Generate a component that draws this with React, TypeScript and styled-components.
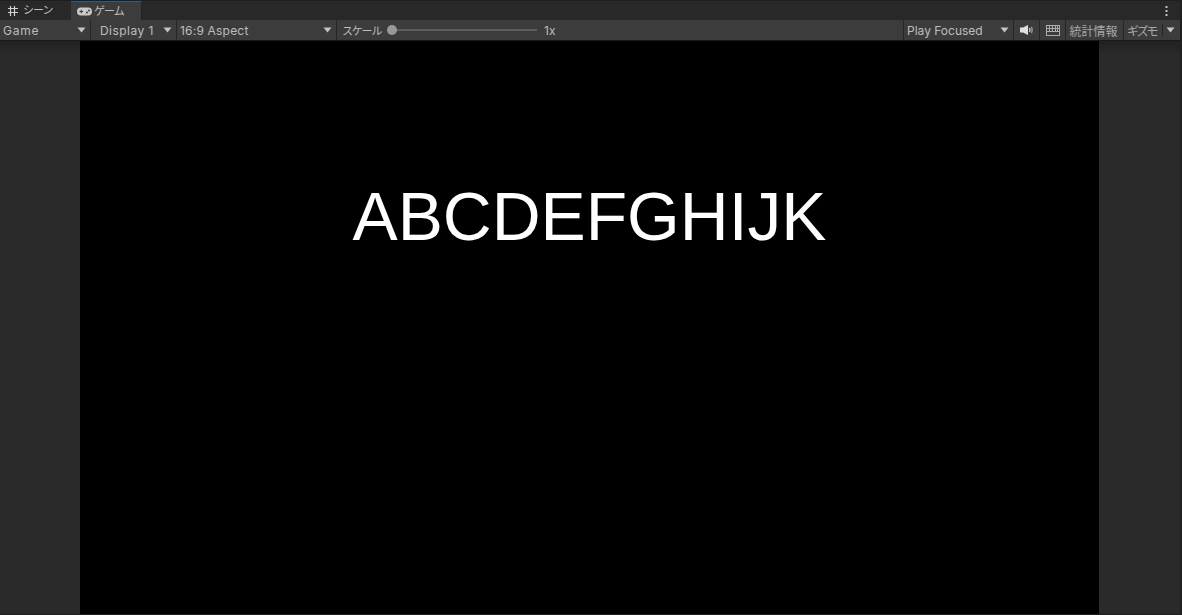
import React from "react";
import styled, { createGlobalStyle } from "styled-components";

const GlobalStyle = createGlobalStyle`
  html, body {
    margin: 0;
    padding: 0;
    height: 100%;
    background: #282828;
    overflow: hidden;
  }
  #root {
    height: 100%;
  }
`;

const Window = styled.div`
  width: 1182px;
  height: 615px;
  box-sizing: border-box;
  display: flex;
  flex-direction: column;
  font-family: Inter, "Noto Sans CJK JP", sans-serif;
  font-size: 12px;
  color: #bdbdbd;
  background: #282828;
  border-right: 2px solid #202020;
`;

const TabBar = styled.div`
  height: 20px;
  flex: none;
  display: flex;
  background: #282828;
  border-top: 1px solid #1e1e1e;
  box-sizing: border-box;
  border-top-right-radius: 3px;
`;

const Tab = styled.div<{ $active?: boolean; $width: number }>`
  width: ${(p) => p.$width}px;
  display: flex;
  align-items: center;
  gap: ${(p) => (p.$active ? 2 : 5)}px;
  box-sizing: border-box;
  padding-left: ${(p) => (p.$active ? 6 : 8)}px;
  margin-left: ${(p) => (p.$active ? 2 : 0)}px;
  background: ${(p) => (p.$active ? "#3c3c3c" : "transparent")};
  border-top: ${(p) => (p.$active ? "1px solid #2c5d87" : "none")};
  border-right: ${(p) => (p.$active ? "1px solid #232323" : "none")};
`;

const TabLabel = styled.span`
  font-size: 11px;
  line-height: 1;
  letter-spacing: -1px;
`;

const TabSpacer = styled.div`
  flex: 1;
`;

const MoreButton = styled.div`
  width: 16px;
  margin-right: 6px;
  display: flex;
  align-items: center;
  justify-content: center;
`;

const Toolbar = styled.div`
  height: 21px;
  flex: none;
  display: flex;
  box-sizing: border-box;
  background: #3c3c3c;
  border-bottom: 1px solid #191919;
`;

const ToolItem = styled.div<{ $width: number; $pad?: number; $spacing?: number }>`
  width: ${(p) => p.$width}px;
  flex: none;
  box-sizing: border-box;
  display: flex;
  align-items: center;
  justify-content: space-between;
  padding: 0 4px 0 ${(p) => p.$pad ?? 3}px;
  border-right: 1px solid #262626;
  white-space: nowrap;
  letter-spacing: ${(p) => p.$spacing ?? 0}px;
`;

const ScaleItem = styled.div`
  flex: 1;
  display: flex;
  align-items: center;
  padding-left: 5px;
  border-right: 1px solid #262626;
`;

const ScaleLabel = styled.span`
  font-size: 11px;
  letter-spacing: -1.2px;
  width: 45px;
`;

const SliderTrack = styled.div`
  position: relative;
  width: 150px;
  height: 2px;
  background: #5e5e5e;
  margin-right: 7px;
`;

const SliderThumb = styled.div`
  position: absolute;
  left: 0;
  top: -4px;
  width: 10px;
  height: 10px;
  border-radius: 50%;
  background: #999999;
`;

const IconButton = styled.div<{ $width: number }>`
  width: ${(p) => p.$width}px;
  flex: none;
  display: flex;
  align-items: center;
  justify-content: center;
  box-sizing: border-box;
  border-right: 1px solid #262626;
`;

const JaButton = styled.div<{ $width: number }>`
  width: ${(p) => p.$width}px;
  flex: none;
  box-sizing: border-box;
  display: flex;
  align-items: center;
  justify-content: center;
  padding-right: 2px;
  font-size: 12px;
  color: #a8a8a8;
  border-right: 1px solid #262626;
`;

const GizmoButton = styled.div`
  width: 56px;
  flex: none;
  box-sizing: border-box;
  padding-left: 3px;
  display: flex;
  align-items: center;
`;

const GizmoLabel = styled.span`
  font-size: 12px;
  width: 29px;
  white-space: nowrap;
  letter-spacing: -2.3px;
  color: #a8a8a8;
`;

const GizmoDivider = styled.div`
  width: 1px;
  height: 12px;
  margin: 0 3px 0 6px;
  background: #262626;
`;

const Body = styled.div`
  flex: 1;
  display: flex;
  background: linear-gradient(#212121, #2a2a2a 14px);
  border-bottom: 1px solid #1e1e1e;
`;

const Gutter = styled.div<{ $width: number }>`
  width: ${(p) => p.$width}px;
  flex: none;
`;

const GameCanvas = styled.div`
  flex: 1;
  background: #000000;
  color: #ffffff;
  font-family: "Liberation Sans", Arial, sans-serif;
  font-size: 67.7px;
  line-height: 78px;
  text-align: center;
  padding-top: 137px;
`;

const Caret = () => (
  <svg width="9" height="6" viewBox="0 0 9 6">
    <path d="M0.5 0.5h8L4.5 5.5z" fill="#c4c4c4" />
  </svg>
);

const GridIcon = () => (
  <svg width="10" height="10" viewBox="0 0 10 10" stroke="#d0d0d0" strokeWidth="1.2" fill="none">
    <path d="M2.5 0v10M6.5 0v10M0 2.5h10M0 6.5h10" />
  </svg>
);

const GamepadIcon = () => (
  <svg width="15" height="9" viewBox="0 0 15 9">
    <path d="M4 0.5h7a4 4 0 0 1 0 8H4a4 4 0 0 1 0-8z" fill="#c8c8c8" />
    <path d="M2.5 4.5h3.5M4.25 2.75v3.5" stroke="#3c3c3c" strokeWidth="1" />
    <circle cx="10" cy="5.5" r="1" fill="#3c3c3c" />
    <circle cx="12" cy="3.5" r="1" fill="#3c3c3c" />
  </svg>
);

const DotsIcon = () => (
  <svg width="3" height="12" viewBox="0 0 3 12" fill="#c4c4c4">
    <rect x="0.5" y="1" width="2" height="2" />
    <rect x="0.5" y="5" width="2" height="2" />
    <rect x="0.5" y="9" width="2" height="2" />
  </svg>
);

const SpeakerIcon = () => (
  <svg width="13" height="10" viewBox="0 0 13 10" fill="#e0e0e0">
    <path d="M0 2.5h3v5H0zM3 2.5L8 0v10L3 7.5z" />
    <path d="M9.5 3q0.8 2 0 4" stroke="#c8c8c8" fill="none" strokeWidth="1.4" />
    <path d="M11.5 2q1.2 3 0 6" stroke="#a8a8a8" fill="none" strokeWidth="1.2" />
  </svg>
);

const KeyboardIcon = () => (
  <svg width="14" height="11" viewBox="0 0 14 11" stroke="#ababab" strokeWidth="1" fill="none">
    <rect x="0.5" y="0.5" width="13" height="10" />
    <path d="M0.5 3.5h13M0.5 6.5h13M3.5 0.5v6M6.5 0.5v6M9.5 0.5v6M11.5 0.5v6" />
  </svg>
);

export default function App() {
  return (
    <>
      <GlobalStyle />
      <Window>
        <TabBar>
          <Tab $width={69}>
            <GridIcon />
            <TabLabel>シーン</TabLabel>
          </Tab>
          <Tab $active $width={71}>
            <GamepadIcon />
            <TabLabel>ゲーム</TabLabel>
          </Tab>
          <TabSpacer />
          <MoreButton>
            <DotsIcon />
          </MoreButton>
        </TabBar>
        <Toolbar>
          <ToolItem $width={91} $spacing={0.75}>
            Game
            <Caret />
          </ToolItem>
          <ToolItem $width={86} $pad={9} $spacing={0.45}>
            Display 1
            <Caret />
          </ToolItem>
          <ToolItem $width={160} $spacing={0.2}>
            16:9 Aspect
            <Caret />
          </ToolItem>
          <ScaleItem>
            <ScaleLabel>スケール</ScaleLabel>
            <SliderTrack>
              <SliderThumb />
            </SliderTrack>
            1x
          </ScaleItem>
          <ToolItem $width={110}>
            Play Focused
            <Caret />
          </ToolItem>
          <IconButton $width={26}>
            <SpeakerIcon />
          </IconButton>
          <IconButton $width={26}>
            <KeyboardIcon />
          </IconButton>
          <JaButton $width={58}>統計情報</JaButton>
          <GizmoButton>
            <GizmoLabel>ギズモ</GizmoLabel>
            <GizmoDivider />
            <Caret />
          </GizmoButton>
        </Toolbar>
        <Body>
          <Gutter $width={80} />
          <GameCanvas>ABCDEFGHIJK</GameCanvas>
          <Gutter $width={81} />
        </Body>
      </Window>
    </>
  );
}
